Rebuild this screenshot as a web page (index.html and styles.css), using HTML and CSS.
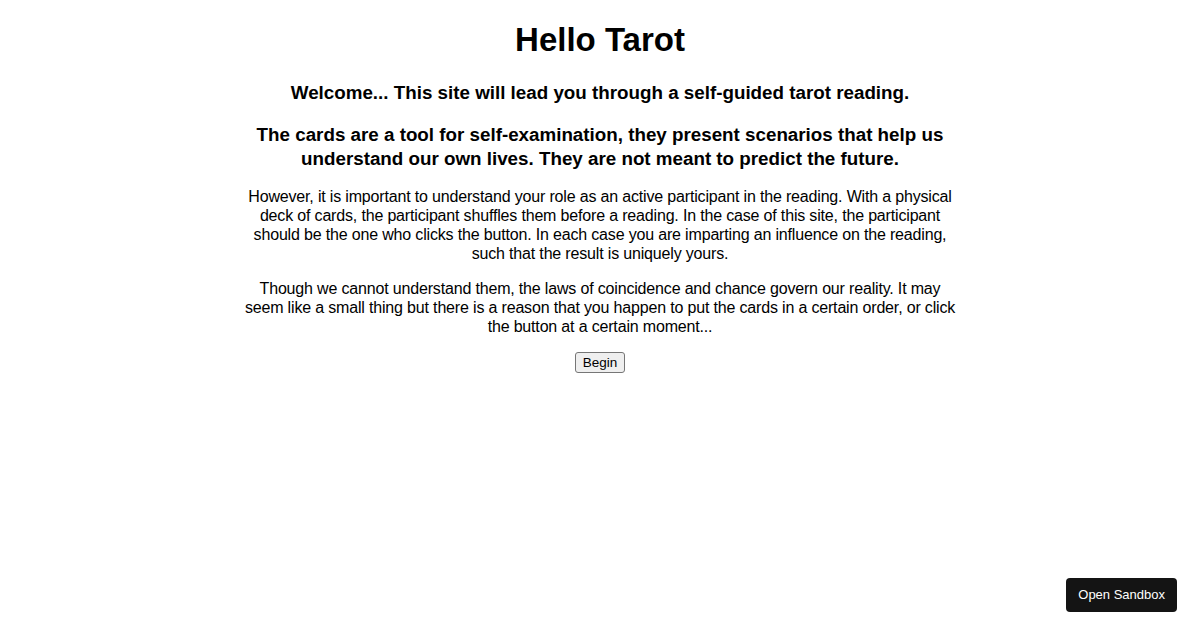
FILE: index.html
```html
<!DOCTYPE html>
<html lang="en">
<head>
    <meta charset="UTF-8">
    <meta name="viewport" content="width=device-width, initial-scale=1.0">
    <title>Hello Tarot</title>
    <link rel="stylesheet" href="styles.css">
</head>
<body>
    <main class="intro">
        <h1>Hello Tarot</h1>
        <h3>Welcome... This site will lead you through a self-guided tarot reading.</h3>
        <h3>The cards are a tool for self-examination, they present scenarios that help us understand our own lives. They are not meant to predict the future.</h3>
        <p>However, it is important to understand your role as an active participant in the reading. With a physical deck of cards, the participant shuffles them before a reading. In the case of this site, the participant should be the one who clicks the button. In each case you are imparting an influence on the reading, such that the result is uniquely yours.</p>
        <p>Though we cannot understand them, the laws of coincidence and chance govern our reality. It may seem like a small thing but there is a reason that you happen to put the cards in a certain order, or click the button at a certain moment...</p>
        <button class="begin-btn">Begin</button>
    </main>
    <a href="#" class="sandbox-btn">Open Sandbox</a>
</body>
</html>
```

FILE: styles.css
```css
body {
    font-family: "Liberation Sans", Arial, sans-serif;
    margin: 0;
    padding: 0;
    color: #000;
    background-color: #fff;
}
.intro {
    max-width: 711px;
    margin: 0 auto;
    text-align: center;
}
.intro h1 {
    font-size: 33px;
    margin: 21px 0 22px;
}
.intro h3 {
    font-size: 18.8px;
    line-height: 24px;
    margin: 18px 0 16px;
}
.intro p {
    font-size: 16px;
    line-height: 19px;
    letter-spacing: -0.17px;
    margin: 16px 0;
}
.begin-btn {
    font-family: "Liberation Sans", Arial, sans-serif;
    font-size: 13.5px;
    padding: 2px 7px;
    border: 1px solid #767676;
    border-radius: 3px;
    background-color: #efefef;
    color: #000;
}
.sandbox-btn {
    position: fixed;
    right: 23px;
    bottom: 18px;
    background-color: #141414;
    color: #fff;
    font-family: "Liberation Sans", Arial, sans-serif;
    font-size: 13px;
    line-height: 16px;
    text-decoration: none;
    padding: 9px 12px;
    border-radius: 4px;
}
```
